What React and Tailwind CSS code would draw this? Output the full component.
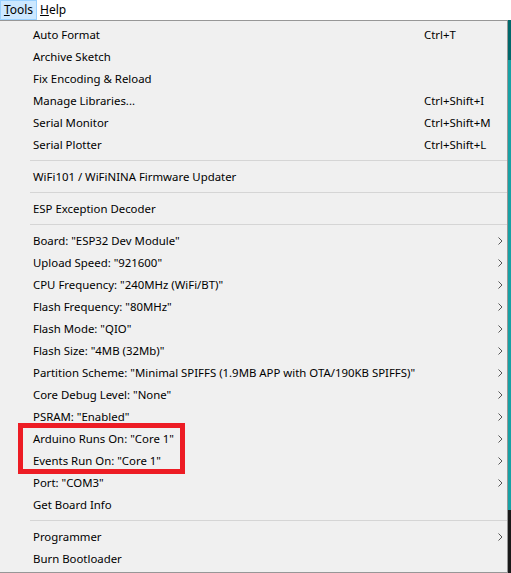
import React from 'react';

const ITEMS = [
  { label: 'Auto Format', shortcut: 'Ctrl+T' },
  { label: 'Archive Sketch' },
  { label: 'Fix Encoding & Reload' },
  { label: 'Manage Libraries...', shortcut: 'Ctrl+Shift+I' },
  { label: 'Serial Monitor', shortcut: 'Ctrl+Shift+M' },
  { label: 'Serial Plotter', shortcut: 'Ctrl+Shift+L' },
  { sep: true },
  { label: 'WiFi101 / WiFiNINA Firmware Updater' },
  { sep: true },
  { label: 'ESP Exception Decoder' },
  { sep: true },
  { label: 'Board: "ESP32 Dev Module"', sub: true },
  { label: 'Upload Speed: "921600"', sub: true },
  { label: 'CPU Frequency: "240MHz (WiFi/BT)"', sub: true },
  { label: 'Flash Frequency: "80MHz"', sub: true },
  { label: 'Flash Mode: "QIO"', sub: true },
  { label: 'Flash Size: "4MB (32Mb)"', sub: true },
  { label: 'Partition Scheme: "Minimal SPIFFS (1.9MB APP with OTA/190KB SPIFFS)"', sub: true },
  { label: 'Core Debug Level: "None"', sub: true },
  { label: 'PSRAM: "Enabled"', sub: true },
  { label: 'Arduino Runs On: "Core 1"', sub: true },
  { label: 'Events Run On: "Core 1"', sub: true },
  { label: 'Port: "COM3"', sub: true },
  { label: 'Get Board Info' },
  { sep: true },
  { label: 'Programmer', sub: true },
  { label: 'Burn Bootloader' },
];

function Chevron() {
  return (
    <svg width="5" height="8" viewBox="0 0 5 8" className="block">
      <path d="M0.5 0.5 L4 4 L0.5 7.5" fill="none" stroke="#555555" strokeWidth="1" />
    </svg>
  );
}

export default function App() {
  return (
    <div
      className="relative w-[511px] h-[573px] overflow-hidden bg-white text-[11.4px] text-black"
      style={{ fontFamily: '"Segoe UI", "Noto Sans", "Open Sans", sans-serif' }}
    >
      {/* Menu bar */}
      <div className="h-[20px] flex items-stretch text-[12px]">
        <div className="w-[37px] flex items-center justify-center bg-[#cce8ff] border border-[#99d1ff]">
          <span><span className="underline">T</span>ools</span>
        </div>
        <div className="px-[3px] flex items-center">
          <span><span className="underline">H</span>elp</span>
        </div>
      </div>

      <div className="flex h-[553px]">
        {/* Dropdown */}
        <div className="w-[508px] bg-[#f0f0f0] border-t border-r border-b border-[#979797] py-[2px]">
          {ITEMS.map((it, i) =>
            it.sep ? (
              <div key={i} className="h-[10px] flex items-center pl-[30px]">
                <div className="flex-1 h-px bg-[#d5d5d5]" />
              </div>
            ) : (
              <div key={i} className="h-[22px] flex items-center pl-[33px] pr-[4px] pt-[1px]">
                <span className="w-[391px] whitespace-nowrap">{it.label}</span>
                {it.shortcut && <span className="whitespace-nowrap">{it.shortcut}</span>}
                {it.sub && <span className="ml-auto"><Chevron /></span>}
              </div>
            )
          )}
        </div>
        {/* Window behind */}
        <div className="flex-1 flex flex-col">
          <div className="h-[40px] bg-[#00686b]" />
          <div className="h-[450px] bg-[#17a1a5]" />
          <div className="flex-1 bg-[#1a1a1a]" />
        </div>
      </div>

      {/* Annotation box */}
      <div className="absolute left-[18px] top-[423px] w-[167px] h-[51px] border-[5px] border-[#ed1c24]" />
    </div>
  );
}
